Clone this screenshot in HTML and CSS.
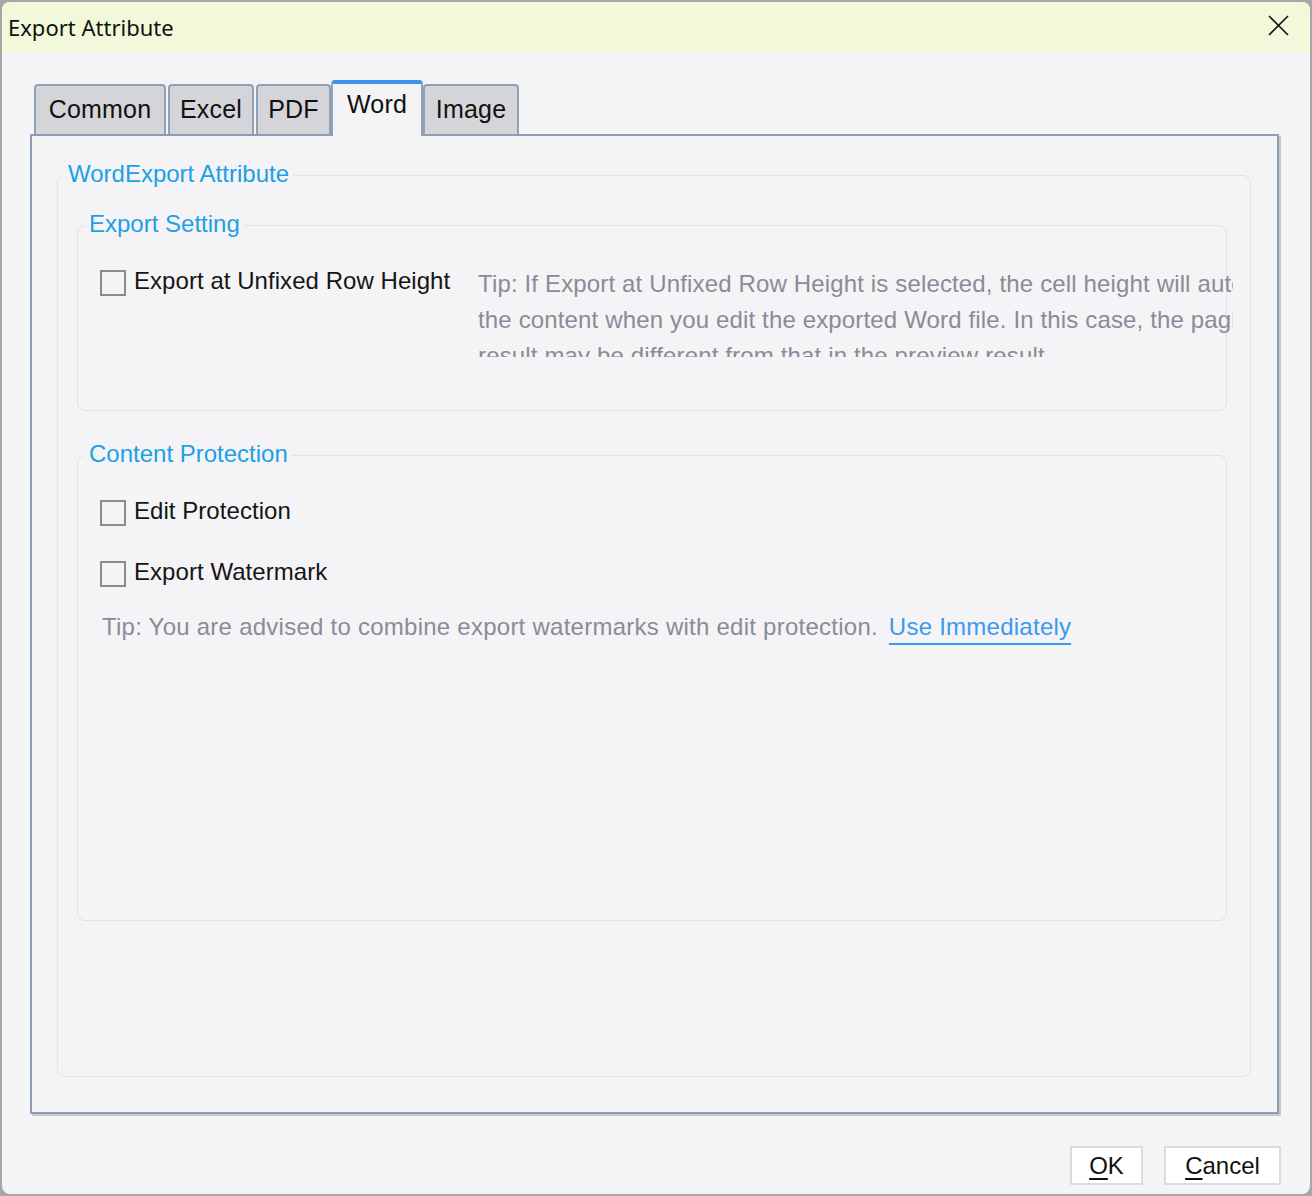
FILE: index.html
```html
<!DOCTYPE html>
<html>
<head>
<meta charset="utf-8">
<title>Export Attribute</title>
<link rel="stylesheet" href="styles.css">
</head>
<body>
<div class="window">
  <div class="titlebar">
    <span class="title">Export Attribute</span>
    <svg class="close" viewBox="0 0 21 21" width="21" height="21"><path d="M1 1L20 20M20 1L1 20" stroke="#1a1a1a" stroke-width="1.7" fill="none"/></svg>
  </div>
  <div class="main">
    <div class="tabs">
      <div class="tab t-common">Common</div>
      <div class="tab t-excel">Excel</div>
      <div class="tab t-pdf">PDF</div>
      <div class="tab t-word active">Word</div>
      <div class="tab t-image">Image</div>
    </div>
    <div class="panel">
      <fieldset class="group outer">
        <legend class="legend-outer">WordExport Attribute</legend>
        <div class="outer-body">
          <fieldset class="group setting">
            <legend>Export Setting</legend>
            <div class="setting-body">
              <div class="row">
                <label class="check fixed"><span class="box"></span><span class="label">Export at Unfixed Row Height</span></label>
                <div class="tipclip">
                  <div class="line">Tip: If Export at Unfixed Row Height is selected, the cell height will automatically adjust to</div>
                  <div class="line">the content when you edit the exported Word file. In this case, the pagination</div>
                  <div class="line">result may be different from that in the preview result.</div>
                </div>
              </div>
            </div>
          </fieldset>
          <fieldset class="group protect">
            <legend>Content Protection</legend>
            <div class="protect-body">
              <label class="check"><span class="box"></span><span class="label">Edit Protection</span></label>
              <label class="check second"><span class="box"></span><span class="label">Export Watermark</span></label>
              <p class="tip">Tip: You are advised to combine export watermarks with edit protection. <a class="link">Use Immediately</a></p>
            </div>
          </fieldset>
        </div>
      </fieldset>
    </div>
    <div class="buttons">
      <button class="btn ok"><u>O</u>K</button>
      <button class="btn cancel"><u>C</u>ancel</button>
    </div>
  </div>
</div>
</body>
</html>
```

FILE: styles.css
```css
* { box-sizing: border-box; }
html, body { margin: 0; }
body {
  background: #a7a7a7;
  width: 1312px;
  height: 1196px;
  padding: 2px;
  font-family: "Liberation Sans", Arial, sans-serif;
  overflow: hidden;
}
.window {
  width: 1308px;
  height: 1192px;
  background: #f4f4f6;
  border-radius: 8px;
  overflow: hidden;
  display: flex;
  flex-direction: column;
}
.titlebar {
  height: 50px;
  flex: 0 0 50px;
  background: #f2f9da;
  display: flex;
  align-items: center;
  justify-content: space-between;
  padding: 0 21px 0 6px;
}
.title {
  font-family: "Noto Sans", "Open Sans", sans-serif;
  font-size: 22px;
  color: #111;
  margin-top: -1px;
}
.close { margin-top: -4px; }
.main {
  flex: 1;
  display: flex;
  flex-direction: column;
  padding: 28px 31px 9px 28px;
  min-height: 0;
}
.tabs {
  display: flex;
  align-items: flex-end;
  height: 54px;
  flex: 0 0 54px;
  padding-left: 4px;
  position: relative;
  z-index: 1;
}
.tab {
  height: 50px;
  border: 2px solid #8fa0b8;
  border-bottom: none;
  border-radius: 4px 4px 0 0;
  background: #d5d5d9;
  color: #111;
  font-size: 25px;
  line-height: 30px;
  letter-spacing: 0.2px;
  text-align: center;
  padding-top: 8px;
}
.t-common { width: 132px; margin-right: 2px; }
.t-excel { width: 86px; margin-right: 2px; }
.t-pdf { width: 75px; }
.t-word { width: 92px; }
.t-image { width: 96px; }
.tab.active {
  height: 56px;
  margin-bottom: -2px;
  background: #f4f4f6;
  border-top: 4px solid #3a93ee;
  padding-top: 5px;
}
.panel {
  flex: 1;
  display: flex;
  flex-direction: column;
  border: 2px solid #8d9db6;
  box-shadow: 2px 2px 0 #c9c9cd;
  padding: 25px 26px 35px 25px;
  min-height: 0;
}
.group {
  margin: 0;
  padding: 0;
  border: 1px solid #e3e3e6;
  border-radius: 8px;
  min-width: 0;
}
legend {
  font-size: 24px;
  line-height: 28px;
  color: #1e9fe6;
  padding: 0 4px;
  margin-left: 7px;
  position: relative;
  top: -1px;
}
.legend-outer { margin-left: 6px; }
.outer { flex: 1; }
.outer-body { padding: 22px 23px 0 19px; }
.setting-body { padding: 24px 0 53px 22px; }
.row { display: flex; align-items: flex-start; }
.check {
  display: flex;
  align-items: flex-start;
  font-size: 24px;
  line-height: 36px;
  color: #151515;
  letter-spacing: 0.05px;
}
.check.fixed { width: 378px; flex: 0 0 378px; }
.box {
  width: 26px;
  height: 26px;
  border: 2px solid #8c8c8c;
  margin-top: 7px;
  margin-right: 8px;
  flex: 0 0 26px;
}
.tipclip {
  width: 755px;
  flex: 0 0 755px;
  height: 91px;
  overflow: hidden;
  margin-top: 3px;
  font-size: 24px;
  line-height: 36px;
  color: #8b8b96;
  letter-spacing: 0.15px;
}
.line { white-space: nowrap; }
.protect { margin-top: 30px; }
.protect-body { padding: 24px 0 275px 22px; }
.check.second { margin-top: 25px; }
.tip {
  margin: 19px 0 0 2px;
  font-size: 24px;
  line-height: 36px;
  color: #8b8b96;
  white-space: nowrap;
  letter-spacing: 0.25px;
}
.link {
  color: #3b99f2;
  border-bottom: 2px solid #3b99f2;
  padding-bottom: 3px;
  margin-left: 4px;
}
.buttons {
  display: flex;
  justify-content: flex-end;
  gap: 21px;
  margin-top: 32px;
  margin-right: -2px;
  height: 39px;
  flex: 0 0 39px;
}
.btn {
  height: 39px;
  background: #fff;
  border: 2px solid #dcdcdc;
  font-family: "Liberation Sans", Arial, sans-serif;
  font-size: 24px;
  color: #111;
  padding: 0;
}
.btn u { text-underline-offset: 4px; }
.ok { width: 73px; }
.cancel { width: 117px; }
```
